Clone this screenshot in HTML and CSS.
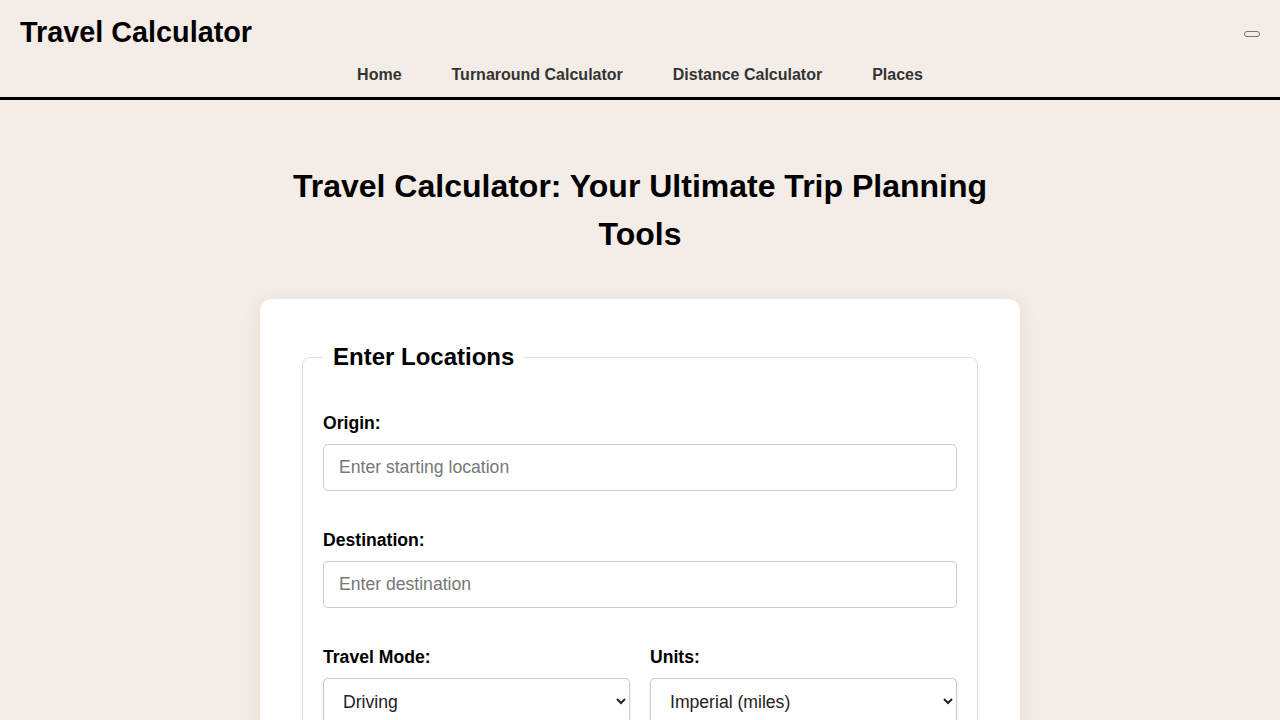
FILE: index.html
```html
<!DOCTYPE html>
<html lang="en">
<head>
    <meta charset="UTF-8">
    <meta name="viewport" content="width=device-width, initial-scale=1.0">
    <title>Travel Calculator</title>
    <link rel="stylesheet" href="styles.css">
</head>
<body>
    <header class="site-header">
        <div class="header-top">
            <div class="logo">Travel Calculator</div>
            <button class="menu-toggle" aria-label="Menu"></button>
        </div>
        <nav class="main-nav">
            <a href="#">Home</a>
            <a href="#">Turnaround Calculator</a>
            <a href="#">Distance Calculator</a>
            <a href="#">Places</a>
        </nav>
    </header>

    <main class="container">
        <h1 class="page-title">Travel Calculator: Your Ultimate Trip Planning Tools</h1>

        <div class="card">
            <form>
                <fieldset class="locations">
                    <legend>Enter Locations</legend>

                    <div class="form-group">
                        <label for="origin">Origin:</label>
                        <input type="text" id="origin" placeholder="Enter starting location">
                    </div>

                    <div class="form-group">
                        <label for="destination">Destination:</label>
                        <input type="text" id="destination" placeholder="Enter destination">
                    </div>

                    <div class="form-row">
                        <div class="form-group">
                            <label for="mode">Travel Mode:</label>
                            <select id="mode">
                                <option>Driving</option>
                                <option>Walking</option>
                                <option>Bicycling</option>
                                <option>Transit</option>
                            </select>
                        </div>
                        <div class="form-group">
                            <label for="units">Units:</label>
                            <select id="units">
                                <option>Imperial (miles)</option>
                                <option>Metric (km)</option>
                            </select>
                        </div>
                    </div>
                </fieldset>
            </form>
        </div>
    </main>
</body>
</html>
```

FILE: styles.css
```css
body {
    font-family: "Liberation Sans", Arial, sans-serif;
    margin: 0;
    padding: 0;
    background-color: #f4ede7;
    color: #000;
}

.site-header {
    padding: 16px 20px 0;
    border-bottom: 3px solid #000;
}

.header-top {
    display: flex;
    justify-content: space-between;
    align-items: center;
}

.logo {
    font-size: 28.8px;
    font-weight: bold;
}

.menu-toggle {
    width: 16px;
    height: 6px;
    padding: 0;
    margin-top: 3px;
    background: transparent;
    border: 1px solid #777;
    border-radius: 4px;
}

.main-nav {
    display: flex;
    justify-content: center;
    padding: 17px 0 13px;
}

.main-nav a {
    padding: 0 25px;
    font-size: 16px;
    font-weight: bold;
    color: #333;
    text-decoration: none;
}

.container {
    max-width: 760px;
    margin: 0 auto;
    padding: 40px 20px;
}

.page-title {
    font-size: 32px;
    line-height: 48px;
    text-align: center;
    margin: 22px 0 41px;
}

.card {
    background-color: #fff;
    border-radius: 12px;
    padding: 44px 40px 40px;
    box-shadow: 0 4px 18px rgba(120, 100, 70, 0.15);
}

.locations {
    margin: 0 2px;
    padding: 42px 20px 20px;
    border: 1px solid #ddd;
    border-radius: 8px;
}

.locations legend {
    font-size: 24px;
    font-weight: bold;
    padding: 0 10px;
}

.form-group {
    margin-bottom: 39px;
}

.form-group label {
    display: block;
    font-size: 1.1em;
    font-weight: bold;
    margin-bottom: 10px;
}

.form-group input,
.form-group select {
    box-sizing: border-box;
    width: 100%;
    height: 47px;
    padding: 12px 15px;
    font-family: inherit;
    font-size: 1.1em;
    border: 1px solid #ccc;
    border-radius: 5px;
    background-color: #fff;
}

.form-group input::placeholder {
    color: #777;
}

.form-group select {
    color: #222;
    box-shadow: 0 1px 3px rgba(0, 0, 0, 0.12);
}

.form-row {
    display: grid;
    grid-template-columns: 1fr 1fr;
    gap: 20px;
}
```
